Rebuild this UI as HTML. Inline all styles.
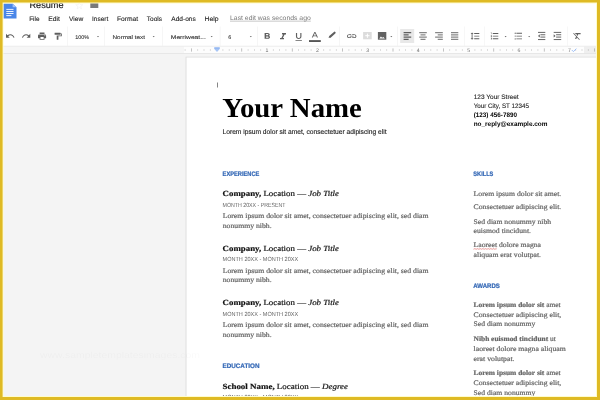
<!DOCTYPE html>
<html><head><meta charset="utf-8">
<style>
html,body{margin:0;padding:0;width:600px;height:400px;overflow:hidden;background:#fff;}
svg{display:block;filter:blur(0.3px);text-rendering:geometricPrecision;}
.ui{font-family:"Liberation Sans",sans-serif;}
.sf{font-family:"Liberation Serif",serif;}
.ss{font-family:"Liberation Sans",sans-serif;}
</style></head>
<body>
<svg width="600" height="400" viewBox="0 0 600 400">
<rect x="0" y="0" width="600" height="400" fill="#ffffff"/>
<rect x="0" y="53.5" width="600" height="347" fill="#f4f4f4"/>
<rect x="0" y="46" width="600" height="7.5" fill="#f6f6f6"/>
<rect x="184" y="46.6" width="400" height="6.5" fill="#fdfdfd"/><rect x="584" y="46.6" width="14" height="6.5" fill="#efefef"/>
<rect x="0" y="45.8" width="600" height="0.6" fill="#e6e6e6"/>
<rect x="0" y="53.1" width="600" height="0.7" fill="#e0e0e0"/>
<rect x="185.6" y="56.7" width="420" height="350" fill="#dcdcdc"/>
<rect x="186.5" y="57.5" width="420" height="350" fill="#ffffff"/>

<g class="ui">
  <path d="M3.4 3.4 H12.6 L16.5 7.2 V18.6 H3.4 Z" fill="#4a86e8"/>
  <path d="M12.6 3.4 V7.2 H16.5 Z" fill="#a1c2fa"/>
  <rect x="6.3" y="8.9" width="7.2" height="0.9" fill="#fff"/>
  <rect x="6.3" y="11" width="7.2" height="0.9" fill="#fff"/>
  <rect x="6.3" y="13.1" width="7.2" height="0.9" fill="#fff"/>
  <rect x="6.3" y="15.2" width="5.1" height="0.9" fill="#fff"/>
  <text x="29.5" y="8" textLength="34" lengthAdjust="spacingAndGlyphs" font-size="9.4" fill="#202020" stroke="#202020" stroke-width="0.18">Resume</text>
  <path d="M79.3 2 L80.2 4.6 L82.9 4.7 L80.8 6.3 L81.5 8.9 L79.3 7.4 L77.1 8.9 L77.8 6.3 L75.7 4.7 L78.4 4.6 Z" fill="none" stroke="#ececec" stroke-width="0.5"/>
  <rect x="90.3" y="3" width="8" height="5" fill="#7a7a7a"/>
  <g font-size="6.6" fill="#1e1e1e" stroke="#1e1e1e" stroke-width="0.1">
    <text x="29.2" y="20.75" textLength="10.3" lengthAdjust="spacingAndGlyphs" >File</text>
    <text x="48.3" y="20.75" textLength="11.7" lengthAdjust="spacingAndGlyphs" >Edit</text>
    <text x="69" y="20.75" textLength="14.3" lengthAdjust="spacingAndGlyphs" >View</text>
    <text x="92" y="20.75" textLength="16.3" lengthAdjust="spacingAndGlyphs" >Insert</text>
    <text x="117" y="20.75" textLength="21.2" lengthAdjust="spacingAndGlyphs" >Format</text>
    <text x="146.8" y="20.75" textLength="15.2" lengthAdjust="spacingAndGlyphs" >Tools</text>
    <text x="171.3" y="20.75" textLength="24.5" lengthAdjust="spacingAndGlyphs" >Add-ons</text>
    <text x="204.5" y="20.75" textLength="14" lengthAdjust="spacingAndGlyphs" >Help</text>
  </g>
  <text x="230" y="19.9" textLength="80.8" lengthAdjust="spacingAndGlyphs" font-size="6.6" fill="#777">Last edit was seconds ago</text>
  <rect x="230" y="20.8" width="80.8" height="0.55" fill="#999"/>
</g>
<g fill="#efefef"><rect x="67.3" y="26.5" width="0.55" height="19.5"/><rect x="104" y="26.5" width="0.55" height="19.5"/><rect x="162.3" y="26.5" width="0.55" height="19.5"/><rect x="219.8" y="26.5" width="0.55" height="19.5"/><rect x="257.3" y="26.5" width="0.55" height="19.5"/><rect x="339.2" y="26.5" width="0.55" height="19.5"/><rect x="397.3" y="26.5" width="0.55" height="19.5"/><rect x="464.5" y="26.5" width="0.55" height="19.5"/><rect x="484.5" y="26.5" width="0.55" height="19.5"/><rect x="567.5" y="26.5" width="0.55" height="19.5"/></g>
<path transform="matrix(0.4146 0 0 0.4556 5.171 30.511)" d="M12.5 8c-2.65 0-5.05.99-6.9 2.6L2 7v9h9l-3.62-3.62c1.39-1.16 3.16-1.880 5.12-1.88 3.54 0 6.55 2.31 7.6 5.5l2.37-.78C21.08 11.03 17.15 8 12.5 8z" fill="#5f5f5f" /><path transform="matrix(0.4057 0 0 0.4556 21.375 30.511)" d="M18.4 10.6C16.55 8.99 14.15 8 11.5 8c-4.65 0-8.58 3.03-9.960 7.22L3.9 16c1.05-3.19 4.05-5.5 7.6-5.5 1.95 0 3.73.72 5.12 1.88L13 16h9V7l-3.6 3.6z" fill="#5f5f5f" /><path transform="matrix(0.4050 0 0 0.4056 37.190 31.283)" d="M19 8H5c-1.66 0-3 1.34-3 3v6h4v4h12v-4h4v-6c0-1.66-1.34-3-3-3zm-3 11H8v-5h8v5zm3-7c-.55 0-1-.45-1-1s.45-1 1-1 1 .45 1 1-.45 1-1 1zm-1-9H6v4h12V3z" fill="#5f5f5f" /><path transform="matrix(0.4235 0 0 0.3550 52.906 31.990)" d="M18 4V3c0-.55-.45-1-1-1H5c-.55 0-1 .45-1 1v4c0 .55.45 1 1 1h12c.55 0 1-.45 1-1V6h1v4H9v11c0 .55.45 1 1 1h2c.55 0 1-.45 1-1v-9h8V4h-3z" fill="#5f5f5f" /><path transform="matrix(0.5023 0 0 0.4143 261.084 31.343)" d="M15.6 10.79c.97-.67 1.65-1.77 1.65-2.79 0-2.26-1.75-4-4-4H7v14h7.04c2.09 0 3.71-1.7 3.71-3.790 0-1.52-.86-2.82-2.15-3.42zM10 6.5h3c.83 0 1.5.67 1.5 1.5s-.67 1.5-1.5 1.5h-3v-3zm3.5 9H10v-3h3.5c.83 0 1.5.67 1.5 1.5s-.67 1.5-1.5 1.5z" fill="#5f5f5f" /><path transform="matrix(0.5000 0 0 0.4357 277.000 31.357)" d="M10 4v3h2.21l-3.42 8H6v3h8v-3h-2.21l3.42-8H18V4z" fill="#5f5f5f" /><path transform="matrix(0.4571 0 0 0.4278 293.214 31.817)" d="M12 17c3.31 0 6-2.690 6-6V3h-2.5v8c0 1.93-1.57 3.5-3.5 3.5S8.5 12.93 8.5 11V3H6v8c0 3.31 2.69 6 6 6zm-7 2v2h14v-2H5z" fill="#5f5f5f" /><path transform="matrix(0.4769 0 0 0.3929 309.177 30.721)" d="M11 3L5.5 17h2.25l1.12-3h6.25l1.12 3h2.25L13 3h-2zm-1.38 9L12 5.67 14.38 12H9.62z" fill="#5f5f5f" /><rect x="309" y="40.2" width="11.8" height="1.7" fill="#444"/><path d="M330.2 36.6 L334.6 32.7" stroke="#5f5f5f" stroke-width="2.1" stroke-linecap="round" fill="none"/><path d="M328.6 37.9 L329.2 35.9 L330.7 37.3 Z" fill="#5f5f5f"/><path transform="matrix(0.4700 0 0 0.3900 346.060 31.470)" d="M3.9 12c0-1.71 1.39-3.1 3.1-3.1h4V7H7c-2.76 0-5 2.24-5 5s2.24 5 5 5h4v-1.9H7c-1.71 0-3.1-1.39-3.1-3.1zM8 13h8v-2H8v2zm9-6h-4v1.9h4c1.71 0 3.1 1.39 3.1 3.1s-1.39 3.1-3.1 3.1h-4V17h4c2.76 0 5-2.24 5-5s-2.24-5-5-5z" fill="#5f5f5f" /><rect x="363.1" y="32" width="8.6" height="7.3" fill="#dcdcdc"/><rect x="366.9" y="33.6" width="1" height="4.2" fill="#fff"/><rect x="365.3" y="35.2" width="4.2" height="1" fill="#fff"/><rect x="377.9" y="32" width="8.4" height="7.7" fill="#626262"/><path d="M379.3 38.4 L380.9 36.6 L382.2 37.8 L383.3 36.9 L384.9 38.4 Z" fill="#fff"/><path transform="matrix(0.4244 0 0 0.4353 469.963 30.876)" d="M6 7h2.5L5 3.5 1.5 7H4v10H1.5L5 20.5 8.5 17H6V7zm4-2v2h12V5H10zm0 14h12v-2H10v2zm0-6h12v-2H10v2z" fill="#5f5f5f" /><path transform="matrix(0.3947 0 0 0.4375 490.011 30.850)" d="M2 17h2v.5H3v1h1v.5H2v1h3v-4H2v1zm1-9h1V4H2v1h1v3zm-1 3h1.8L2 13.1v.9h3v-1H3.2L5 10.9V10H2v1zm5-6v2h14V5H7zm0 14h14v-2H7v2zm0-6h14v-2H7v2z" fill="#5f5f5f" /><path transform="matrix(0.4000 0 0 0.4667 513.600 30.500)" d="M4 10.5c-.83 0-1.5.67-1.5 1.5s.67 1.5 1.5 1.5 1.5-.67 1.5-1.5-.67-1.5-1.5-1.5zm0-6c-.83 0-1.5.67-1.5 1.5S3.17 7.5 4 7.5 5.5 6.83 5.5 6 4.83 4.5 4 4.5zm0 12c-.83 0-1.5.68-1.5 1.5s.68 1.5 1.5 1.5 1.5-.68 1.5-1.5-.67-1.5-1.5-1.5zM7 19h14v-2H7v2zm0-6h14v-2H7v2zm0-8v2h14V5H7z" fill="#5f5f5f" /><rect x="538.0" y="31.9" width="7.30" height="0.95" fill="#5f5f5f"/><rect x="540.40" y="34.3" width="4.90" height="0.95" fill="#5f5f5f"/><rect x="540.40" y="36.6" width="4.90" height="0.95" fill="#5f5f5f"/><rect x="538.0" y="39.1" width="7.30" height="0.95" fill="#5f5f5f"/><path d="M539.80 34.2 L538.0 35.9 L539.80 37.6 Z" fill="#5f5f5f"/><rect x="553.7" y="31.9" width="7.50" height="0.95" fill="#5f5f5f"/><rect x="556.10" y="34.3" width="5.10" height="0.95" fill="#5f5f5f"/><rect x="556.10" y="36.6" width="5.10" height="0.95" fill="#5f5f5f"/><rect x="553.7" y="39.1" width="7.50" height="0.95" fill="#5f5f5f"/><path d="M553.7 34.2 L555.50 35.9 L553.7 37.6 Z" fill="#5f5f5f"/><path transform="matrix(0.4111 0 0 0.4375 572.378 30.812)" d="M3.27 5L2 6.27l6.97 6.97L6.5 19h3l1.57-3.66L16.73 21 18 19.73 3.55 5.27 3.27 5zM6 5v.18L8.82 8h2.4l-.72 1.68 2.1 2.1L14.21 8H20V5H6z" fill="#5f5f5f" />
<rect x="400.2" y="29" width="14" height="14" fill="#e8e8e8"/>
<rect x="403.60" y="32.2" width="7.60" height="1" fill="#3c3c3c"/>
<rect x="403.60" y="34.4" width="5.02" height="1" fill="#3c3c3c"/>
<rect x="403.60" y="36.6" width="7.60" height="1" fill="#3c3c3c"/>
<rect x="403.60" y="38.8" width="5.02" height="1" fill="#3c3c3c"/>
<rect x="419.20" y="32.2" width="7.60" height="1" fill="#6a6a6a"/>
<rect x="420.49" y="34.4" width="5.02" height="1" fill="#6a6a6a"/>
<rect x="419.20" y="36.6" width="7.60" height="1" fill="#6a6a6a"/>
<rect x="420.49" y="38.8" width="5.02" height="1" fill="#6a6a6a"/>
<rect x="435.10" y="32.2" width="7.70" height="1" fill="#6a6a6a"/>
<rect x="437.72" y="34.4" width="5.08" height="1" fill="#6a6a6a"/>
<rect x="435.10" y="36.6" width="7.70" height="1" fill="#6a6a6a"/>
<rect x="437.72" y="38.8" width="5.08" height="1" fill="#6a6a6a"/>
<rect x="451.00" y="32.2" width="7.30" height="1" fill="#6a6a6a"/>
<rect x="451.00" y="34.4" width="7.30" height="1" fill="#6a6a6a"/>
<rect x="451.00" y="36.6" width="7.30" height="1" fill="#6a6a6a"/>
<rect x="451.00" y="38.8" width="7.30" height="1" fill="#6a6a6a"/>

<g class="ui" font-size="5.4" fill="#333" stroke="#333" stroke-width="0.1">
  <text x="75.3" y="38.5" textLength="13.9" lengthAdjust="spacingAndGlyphs" >100%</text>
  <text x="112.5" y="38.5" textLength="32.5" lengthAdjust="spacingAndGlyphs" >Normal text</text>
  <text x="170.8" y="38.5" textLength="35" lengthAdjust="spacingAndGlyphs" >Merriweat...</text>
  <text x="228.3" y="38.5" textLength="3" lengthAdjust="spacingAndGlyphs" >6</text>
</g>
<g fill="#666"><path d="M97.0 36.1 h2 l-1 1.1 z"/><path d="M152.7 36.1 h2 l-1 1.1 z"/><path d="M210.7 36.1 h2 l-1 1.1 z"/><path d="M249.8 36.1 h2 l-1 1.1 z"/><path d="M390.3 36.1 h2 l-1 1.1 z"/><path d="M504.6 36.1 h2 l-1 1.1 z"/><path d="M528.2 36.1 h2 l-1 1.1 z"/></g>

<g fill="#9a9a9a" class="ui">
<rect x="184.70" y="49.6" width="0.8" height="0.8"/>
<rect x="191.10" y="48.4" width="0.6" height="3.2"/>
<rect x="197.30" y="49.6" width="0.8" height="0.8"/>
<rect x="203.60" y="49.6" width="0.8" height="0.8"/>
<rect x="209.90" y="49.6" width="0.8" height="0.8"/>
<rect x="222.50" y="49.6" width="0.8" height="0.8"/>
<rect x="228.80" y="49.6" width="0.8" height="0.8"/>
<rect x="235.10" y="49.6" width="0.8" height="0.8"/>
<rect x="241.50" y="48.4" width="0.6" height="3.2"/>
<rect x="247.70" y="49.6" width="0.8" height="0.8"/>
<rect x="254.00" y="49.6" width="0.8" height="0.8"/>
<rect x="260.30" y="49.6" width="0.8" height="0.8"/>
<text x="267.0" y="52" font-size="5.2" fill="#6f6f6f" text-anchor="middle">1</text>
<rect x="272.90" y="49.6" width="0.8" height="0.8"/>
<rect x="279.20" y="49.6" width="0.8" height="0.8"/>
<rect x="285.50" y="49.6" width="0.8" height="0.8"/>
<rect x="291.90" y="48.4" width="0.6" height="3.2"/>
<rect x="298.10" y="49.6" width="0.8" height="0.8"/>
<rect x="304.40" y="49.6" width="0.8" height="0.8"/>
<rect x="310.70" y="49.6" width="0.8" height="0.8"/>
<text x="317.4" y="52" font-size="5.2" fill="#6f6f6f" text-anchor="middle">2</text>
<rect x="323.30" y="49.6" width="0.8" height="0.8"/>
<rect x="329.60" y="49.6" width="0.8" height="0.8"/>
<rect x="335.90" y="49.6" width="0.8" height="0.8"/>
<rect x="342.30" y="48.4" width="0.6" height="3.2"/>
<rect x="348.50" y="49.6" width="0.8" height="0.8"/>
<rect x="354.80" y="49.6" width="0.8" height="0.8"/>
<rect x="361.10" y="49.6" width="0.8" height="0.8"/>
<text x="367.8" y="52" font-size="5.2" fill="#6f6f6f" text-anchor="middle">3</text>
<rect x="373.70" y="49.6" width="0.8" height="0.8"/>
<rect x="380.00" y="49.6" width="0.8" height="0.8"/>
<rect x="386.30" y="49.6" width="0.8" height="0.8"/>
<rect x="392.70" y="48.4" width="0.6" height="3.2"/>
<rect x="398.90" y="49.6" width="0.8" height="0.8"/>
<rect x="405.20" y="49.6" width="0.8" height="0.8"/>
<rect x="411.50" y="49.6" width="0.8" height="0.8"/>
<text x="418.2" y="52" font-size="5.2" fill="#6f6f6f" text-anchor="middle">4</text>
<rect x="424.10" y="49.6" width="0.8" height="0.8"/>
<rect x="430.40" y="49.6" width="0.8" height="0.8"/>
<rect x="436.70" y="49.6" width="0.8" height="0.8"/>
<rect x="443.10" y="48.4" width="0.6" height="3.2"/>
<rect x="449.30" y="49.6" width="0.8" height="0.8"/>
<rect x="455.60" y="49.6" width="0.8" height="0.8"/>
<rect x="461.90" y="49.6" width="0.8" height="0.8"/>
<text x="468.6" y="52" font-size="5.2" fill="#6f6f6f" text-anchor="middle">5</text>
<rect x="474.50" y="49.6" width="0.8" height="0.8"/>
<rect x="480.80" y="49.6" width="0.8" height="0.8"/>
<rect x="487.10" y="49.6" width="0.8" height="0.8"/>
<rect x="493.50" y="48.4" width="0.6" height="3.2"/>
<rect x="499.70" y="49.6" width="0.8" height="0.8"/>
<rect x="506.00" y="49.6" width="0.8" height="0.8"/>
<rect x="512.30" y="49.6" width="0.8" height="0.8"/>
<text x="519.0" y="52" font-size="5.2" fill="#6f6f6f" text-anchor="middle">6</text>
<rect x="524.90" y="49.6" width="0.8" height="0.8"/>
<rect x="531.20" y="49.6" width="0.8" height="0.8"/>
<rect x="537.50" y="49.6" width="0.8" height="0.8"/>
<rect x="543.90" y="48.4" width="0.6" height="3.2"/>
<rect x="550.10" y="49.6" width="0.8" height="0.8"/>
<rect x="556.40" y="49.6" width="0.8" height="0.8"/>
<rect x="562.70" y="49.6" width="0.8" height="0.8"/>
<text x="569.4" y="52" font-size="5.2" fill="#6f6f6f" text-anchor="middle">7</text>
<rect x="575.30" y="49.6" width="0.8" height="0.8"/>
<rect x="581.60" y="49.6" width="0.8" height="0.8"/>
<rect x="587.90" y="49.6" width="0.8" height="0.8"/>
<rect x="594.30" y="48.4" width="0.6" height="3.2"/>
</g>
<path d="M214.3 47.5 h5.4 v1.4 l-2.7 3 l-2.7 -3 z" fill="#a7c5f5"/><rect x="214.3" y="47.5" width="5.4" height="1" fill="#86aef0"/>
<path d="M571.8 50 l1.6 1.6 l3 -3" fill="none" stroke="#8ab4f8" stroke-width="0.8"/>

<!-- document -->
<rect x="217.3" y="82.5" width="0.6" height="5" fill="#333"/>
<text x="222.3" y="116.8" textLength="139.6" lengthAdjust="spacingAndGlyphs" class="sf" font-size="27.6" font-weight="bold" fill="#000">Your Name</text>
<text x="222.5" y="133.7" textLength="164" lengthAdjust="spacingAndGlyphs" class="ss" font-size="6.9" fill="#1a1a1a" stroke="#1a1a1a" stroke-width="0.12">Lorem ipsum dolor sit amet, consectetuer adipiscing elit</text>

<g class="ss" font-size="6.5">
  <text x="473.7" y="99.3" textLength="45" lengthAdjust="spacingAndGlyphs" fill="#222" stroke="#222" stroke-width="0.1">123 Your Street</text>
  <text x="473.7" y="108" textLength="55.3" lengthAdjust="spacingAndGlyphs" fill="#222" stroke="#222" stroke-width="0.1">Your City, ST 12345</text>
  <text x="473.7" y="116.7" textLength="43.3" lengthAdjust="spacingAndGlyphs" fill="#000" font-weight="bold">(123) 456-7890</text>
  <text x="473.7" y="125.5" textLength="73.8" lengthAdjust="spacingAndGlyphs" fill="#000" font-weight="bold">no_reply@example.com</text>
</g>

<g class="ss" font-size="6.5" font-weight="bold" fill="#3468b6" stroke="#3468b6" stroke-width="0.22">
  <text x="222.6" y="176.3" textLength="36.8" lengthAdjust="spacingAndGlyphs" >EXPERIENCE</text>
  <text x="222.5" y="368.4" textLength="37" lengthAdjust="spacingAndGlyphs" >EDUCATION</text>
  <text x="473.3" y="176.4" textLength="20.1" lengthAdjust="spacingAndGlyphs" >SKILLS</text>
  <text x="473.3" y="287.8" textLength="26.5" lengthAdjust="spacingAndGlyphs" >AWARDS</text>
</g>
<g class="sf" font-size="7.8" fill="#111" stroke="#111" stroke-width="0.18">
<text x="222.6" y="196.2" textLength="116.4" lengthAdjust="spacingAndGlyphs" ><tspan font-weight="bold">Company,</tspan> Location — <tspan font-style="italic">Job Title</tspan></text><text x="222.6" y="250.8" textLength="116.4" lengthAdjust="spacingAndGlyphs" ><tspan font-weight="bold">Company,</tspan> Location — <tspan font-style="italic">Job Title</tspan></text><text x="222.6" y="305.3" textLength="116.4" lengthAdjust="spacingAndGlyphs" ><tspan font-weight="bold">Company,</tspan> Location — <tspan font-style="italic">Job Title</tspan></text><text x="222.5" y="388.5" textLength="125.5" lengthAdjust="spacingAndGlyphs" ><tspan font-weight="bold">School Name,</tspan> Location — <tspan font-style="italic">Degree</tspan></text></g>
<g class="ss" font-size="6.0" fill="#666">
<text x="222.6" y="206.6" textLength="62.8" lengthAdjust="spacingAndGlyphs" >MONTH 20XX - PRESENT</text><text x="222.6" y="261.1" textLength="75.5" lengthAdjust="spacingAndGlyphs" >MONTH 20XX - MONTH 20XX</text><text x="222.6" y="315.5" textLength="75.5" lengthAdjust="spacingAndGlyphs" >MONTH 20XX - MONTH 20XX</text><text x="222.6" y="398.8" textLength="75.5" lengthAdjust="spacingAndGlyphs" >MONTH 20XX - MONTH 20XX</text></g>
<g class="sf" font-size="7.0" fill="#666" stroke="#666" stroke-width="0.2">
<text x="222.7" y="218.4" textLength="205.9" lengthAdjust="spacingAndGlyphs" >Lorem ipsum dolor sit amet, consectetuer adipiscing elit, sed diam</text><text x="222.7" y="228.15" textLength="49" lengthAdjust="spacingAndGlyphs" >nonummy nibh.</text><text x="222.7" y="272.5" textLength="205.9" lengthAdjust="spacingAndGlyphs" >Lorem ipsum dolor sit amet, consectetuer adipiscing elit, sed diam</text><text x="222.7" y="282.25" textLength="49" lengthAdjust="spacingAndGlyphs" >nonummy nibh.</text><text x="222.7" y="326.9" textLength="205.9" lengthAdjust="spacingAndGlyphs" >Lorem ipsum dolor sit amet, consectetuer adipiscing elit, sed diam</text><text x="222.7" y="336.65" textLength="49" lengthAdjust="spacingAndGlyphs" >nonummy nibh.</text><text x="473.6" y="195.55" textLength="87.7" lengthAdjust="spacingAndGlyphs" >Lorem ipsum dolor sit amet.</text><text x="473.6" y="209.3" textLength="87.7" lengthAdjust="spacingAndGlyphs" >Consectetuer adipiscing elit.</text><text x="473.6" y="223.5" textLength="77.60000000000001" lengthAdjust="spacingAndGlyphs" >Sed diam nonummy nibh</text><text x="473.6" y="233.20000000000002" textLength="57.400000000000006" lengthAdjust="spacingAndGlyphs" >euismod tincidunt.</text><text x="473.6" y="247.0" textLength="67.4" lengthAdjust="spacingAndGlyphs" >Laoreet dolore magna</text><text x="473.6" y="256.5" textLength="67.4" lengthAdjust="spacingAndGlyphs" >aliquam erat volutpat.</text><text x="473.6" y="306.8" textLength="87.10000000000001" lengthAdjust="spacingAndGlyphs" ><tspan font-weight="bold">Lorem ipsum dolor sit</tspan> amet</text><text x="473.6" y="316.55" textLength="87.7" lengthAdjust="spacingAndGlyphs" >Consectetuer adipiscing elit,</text><text x="473.6" y="326.3" textLength="61.7" lengthAdjust="spacingAndGlyphs" >Sed diam nonummy</text><text x="473.6" y="340.8" textLength="82.2" lengthAdjust="spacingAndGlyphs" ><tspan font-weight="bold">Nibh euismod tincidunt</tspan> ut</text><text x="473.6" y="350.5" textLength="92.2" lengthAdjust="spacingAndGlyphs" >laoreet dolore magna aliquam</text><text x="473.6" y="360.55" textLength="40.900000000000006" lengthAdjust="spacingAndGlyphs" >erat volutpat.</text><text x="473.6" y="374.90000000000003" textLength="87.10000000000001" lengthAdjust="spacingAndGlyphs" ><tspan font-weight="bold">Lorem ipsum dolor sit</tspan> amet</text><text x="473.6" y="384.8" textLength="87.7" lengthAdjust="spacingAndGlyphs" >Consectetuer adipiscing elit,</text><text x="473.6" y="394.6" textLength="61.7" lengthAdjust="spacingAndGlyphs" >Sed diam nonummy</text></g>
<path d="M473.5 249.2 l0.8 -0.5 l0.8 0.5 l0.8 -0.5 l0.8 0.5 l0.8 -0.5 l0.8 0.5 l0.8 -0.5 l0.8 0.5 l0.8 -0.5 l0.8 0.5 l0.8 -0.5 l0.8 0.5 l0.8 -0.5 l0.8 0.5 l0.8 -0.5 l0.8 0.5 l0.8 -0.5 l0.8 0.5 l0.8 -0.5 l0.8 0.5 l0.8 -0.5 l0.8 0.5 l0.8 -0.5 l0.8 0.5 l0.8 -0.5 l0.8 0.5 l0.8 -0.5 l0.8 0.5 l0.8 -0.5" fill="none" stroke="#d9534f" stroke-width="0.6"/>
<text x="40" y="357.5" textLength="160" lengthAdjust="spacingAndGlyphs" class="ss" font-size="8.8" fill="#000" fill-opacity="0.025">www.sampletemplatesimages.com</text>
<path d="M0 0 H600 V400 H0 Z M3.5 3.5 V396 H596 V3.5 Z" fill="#fffccc" fill-rule="evenodd"/>
<path d="M0 0 H600 V400 H0 Z M2.6 2.6 V397.1 H597 V2.6 Z" fill="#dfba24" fill-rule="evenodd"/>
</svg>
</body></html>
